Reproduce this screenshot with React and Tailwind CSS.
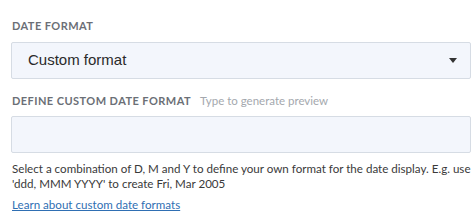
import React from 'react';

function App() {
    return (
        <div className="w-[474px] h-[217px] bg-white overflow-hidden" style={{ fontFamily: 'Lato, "Noto Sans", sans-serif' }}>
            <div className="pl-[11px] pr-[3px] pt-[19px]">
                <div className="text-[11px] leading-[13px] font-bold tracking-[0.04em] text-[#6b6f76] pl-px">DATE FORMAT</div>

                <div className="mt-[10px] h-[37px] flex items-center justify-between bg-[#f3f6fc] border border-[#d6dce4] rounded-[2px] pl-[16px] pr-[13px]">
                    <span className="text-[15px] text-[#2a2a2a]" style={{ fontFamily: '"Liberation Sans", Arial, sans-serif' }}>Custom format</span>
                    <svg width="8" height="5" viewBox="0 0 8 5"><path d="M0 0h8L4 5z" fill="#333" /></svg>
                </div>

                <div className="mt-[15px] flex items-baseline gap-[9px] pl-px">
                    <span className="text-[11px] leading-[13px] font-bold tracking-[0.04em] text-[#6b6f76]">DEFINE CUSTOM DATE FORMAT</span>
                    <span className="text-[11.5px] leading-[13px] text-[#a4a8ae]">Type to generate preview</span>
                </div>

                <div className="mt-[9px] h-[37px] bg-[#f3f6fc] border border-[#d6dce4] rounded-[2px]"></div>

                <p className="mt-[8px] text-[11.6px] leading-[15px] text-[#3a3a3a] pl-px">
                    Select a combination of D, M and Y to define your own format for the date display. E.g. use 'ddd, MMM YYYY' to create Fri, Mar 2005
                </p>
                <a href="#" className="mt-[6px] inline-block text-[11.6px] leading-[15px] text-[#2f6fb3] underline pl-px">Learn about custom date formats</a>
            </div>
        </div>
    );
}

export default App;
